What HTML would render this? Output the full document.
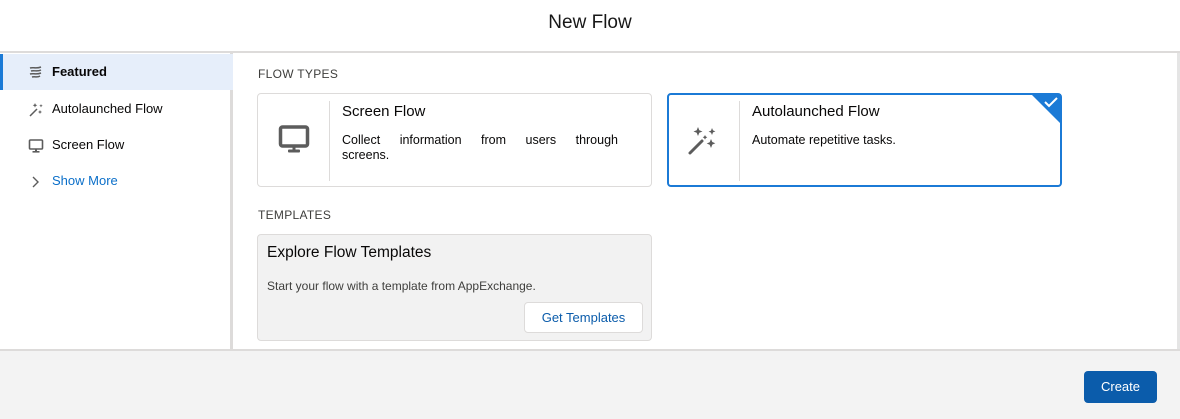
<!DOCTYPE html>
<html><head><style>
*{margin:0;padding:0;box-sizing:border-box}
body{width:1180px;height:419px;overflow:hidden;background:#fff;font-family:"Liberation Sans",sans-serif;color:#080707;position:relative}
.a{position:absolute}
.hdr{left:0;top:0;width:1180px;height:53px;border-bottom:2px solid #dddbda;text-align:center;font-size:19px;line-height:46px;color:#181818}
.side{left:0;top:53px;width:233px;height:296px;border-right:3px solid #dddbda}
.item{position:absolute;left:0;width:233px;height:36px;font-size:13px;line-height:36px;padding-left:52px}
.item svg{position:absolute;left:28px;top:11px}
.sel{background:#e6eefa;border-left:3px solid #1b7ad6;padding-left:49px;font-weight:bold}
.sel svg{left:25px}
.lbl{font-size:12px;color:#3e3e3c;letter-spacing:.3px}
.card{border:1px solid #dddbda;border-radius:4px;background:#fff}
.card .div{position:absolute;left:71px;top:7px;width:1px;height:80px;background:#dddbda}
.card h3{position:absolute;left:84px;top:9px;font-size:15px;font-weight:normal}
.card p{position:absolute;left:84px;top:39px;font-size:12.5px;line-height:15px}
.foot{left:0;top:349px;width:1180px;height:70px;background:#f3f3f3;border-top:2px solid #dddbda}
</style></head><body>
<div class="a hdr">New Flow</div>
<div class="a" style="right:0;top:53px;width:3px;height:296px;background:#e5e5e5"></div>
<div class="a side">
 <div class="item sel" style="top:1px"><svg width="16" height="16" viewBox="0 0 16 16" fill="none" stroke="#5c5c5c" stroke-width="1.5"><path d="M2 3c3-1 6 1 11-1M3 6c3-1 6 1 10-1M2 9c3-1 6 1 11-1M4 12c3-1 5 1 8-1"/></svg>Featured</div>
 <div class="item" style="top:38px"><svg width="16" height="16" viewBox="0 0 16 16" fill="#5c5c5c" stroke="#5c5c5c"><path d="M2 14L9 7" stroke-width="1.5"/><path d="M7 1l.7 1.6L9.3 3.3 7.7 4 7 5.6 6.3 4 4.7 3.3 6.3 2.6z M13 2l.5 1.2 1.2.5-1.2.5L13 5.4l-.5-1.2-1.2-.5 1.2-.5z M12 8l.6 1.4 1.4.6-1.4.6L12 12l-.6-1.4L10 10l1.4-.6z" stroke="none"/></svg>Autolaunched Flow</div>
 <div class="item" style="top:74px"><svg width="16" height="16" viewBox="0 0 16 16"><rect x="1.5" y="2" width="13" height="9" rx="1" fill="none" stroke="#5c5c5c" stroke-width="1.6"/><rect x="7" y="11" width="2" height="2" fill="#5c5c5c"/><rect x="4.5" y="13" width="7" height="1.6" fill="#5c5c5c"/></svg>Screen Flow</div>
 <div class="item" style="top:110px;color:#0b6fc9"><svg width="16" height="16" viewBox="0 0 16 16" fill="none" stroke="#5c5c5c" stroke-width="1.4"><path d="M5 3l5 5-5 5"/></svg>Show More</div>
</div>
<div class="a lbl" style="left:258px;top:67px">FLOW TYPES</div>
<div class="a card" style="left:257px;top:93px;width:395px;height:94px">
 <svg class="a" style="left:20px;top:30px" width="32" height="32" viewBox="0 0 32 32"><rect x="2.5" y="3" width="27" height="19" rx="2" fill="none" stroke="#5c5c5c" stroke-width="3.5"/><rect x="14.5" y="22" width="3" height="4" fill="#5c5c5c"/><rect x="10" y="25.5" width="12" height="3" rx="1" fill="#5c5c5c"/></svg>
 <div class="div"></div><h3>Screen Flow</h3>
 <p style="width:276px;text-align:justify;text-align-last:left">Collect&nbsp;&nbsp; information&nbsp;&nbsp; from&nbsp;&nbsp; users&nbsp;&nbsp; through screens.</p>
</div>
<div class="a card" style="left:667px;top:93px;width:395px;height:94px;border:2px solid #1b7ad6">
 <svg class="a" style="left:18px;top:30px" width="34" height="32" viewBox="0 0 34 32"><path d="M3 28L15 16" stroke="#5c5c5c" stroke-width="3" stroke-linecap="round"/><path fill="#5c5c5c" d="M11 2l1.3 3.2 3.2 1.3-3.2 1.3L11 11l-1.3-3.2-3.2-1.3 3.2-1.3z M25 3l1 2.4 2.4 1-2.4 1L25 10l-1-2.4-2.4-1 2.4-1z M24 14l1.3 3 3 1.3-3 1.3L24 23l-1.3-3.2-3-1.3 3-1.3z M18 10l.8 1.5 1.5.8-1.5.8L18 14.6l-.8-1.5-1.5-.8 1.5-.8z"/></svg>
 <div class="div" style="left:70px;top:6px"></div><h3 style="left:83px;top:8px">Autolaunched Flow</h3>
 <p style="left:83px;top:38px">Automate repetitive tasks.</p>
 <svg class="a" style="right:-1px;top:-1px" width="30" height="30" viewBox="0 0 30 30"><path d="M0 0H30V30Z" fill="#1b7ad6"/><path d="M14 8l4 4 8-8" fill="none" stroke="#fff" stroke-width="2"/></svg>
</div>
<div class="a lbl" style="left:258px;top:208px">TEMPLATES</div>
<div class="a" style="left:257px;top:234px;width:395px;height:107px;background:#f2f2f2;border:1px solid #dddbda;border-radius:4px">
 <div class="a" style="left:9px;top:9px;font-size:15.5px">Explore Flow Templates</div>
 <div class="a" style="left:9px;top:44px;font-size:12px;color:#3e3e3c">Start your flow with a template from AppExchange.</div>
 <div class="a" style="left:266px;top:67px;width:119px;height:31px;background:#fff;border:1px solid #dddbda;border-radius:4px;text-align:center;line-height:29px;font-size:13px;color:#0b5cab">Get Templates</div>
</div>
<div class="a foot"><div class="a" style="left:1084px;top:20px;width:73px;height:32px;background:#0b5cab;border-radius:4px;color:#fff;text-align:center;line-height:32px;font-size:13px">Create</div></div>
</body></html>
